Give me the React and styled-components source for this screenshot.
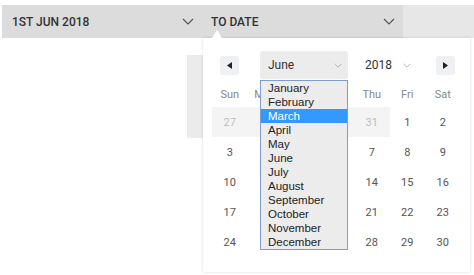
import { createGlobalStyle } from 'styled-components'
import styled from 'styled-components'

const GlobalStyle = createGlobalStyle`
  body {
    margin: 0;
    background: #ffffff;
    font-family: Roboto, 'Liberation Sans', sans-serif;
  }
`

const Page = styled.div`
  position: relative;
  width: 474px;
  height: 275px;
  overflow: hidden;
  padding-top: 5px;
  box-sizing: border-box;
`

const Bar = styled.div`
  display: flex;
  height: 33px;
  margin-left: 2px;
  background-color: #e7e7e7;
`

const Field = styled.div`
  display: flex;
  align-items: center;
  justify-content: space-between;
  width: ${(p) => p.width}px;
  box-sizing: border-box;
  padding: 0 ${(p) => p.right}px 0 ${(p) => p.left}px;
  background-color: #dcdcdc;
  color: #333333;
  font-size: 12px;
  font-weight: 500;
  text-transform: uppercase;
`

const Backdrop = styled.div`
  margin: 17px 0 0 187px;
  width: 240px;
  height: 83px;
  background-color: #ebebeb;
`

const Popup = styled.div`
  position: absolute;
  left: 203px;
  top: 38px;
  width: 267px;
  height: 234px;
  background-color: #ffffff;
  box-shadow: 0 0 3px rgba(0, 0, 0, 0.14);

  &:before {
    content: '';
    position: absolute;
    top: -8px;
    left: 9px;
    border-left: 5px solid transparent;
    border-right: 5px solid transparent;
    border-bottom: 8px solid #ffffff;
  }
`

const Header = styled.div`
  display: flex;
  align-items: center;
  height: 28px;
  padding: 13px 15px 0 17px;
`

const NavButton = styled.div`
  display: flex;
  align-items: center;
  justify-content: center;
  width: 19px;
  height: 19px;
  border-radius: 3px;
  background-color: #eef0f4;
  margin-left: ${(p) => (p.next ? 'auto' : '0')};
`

const MonthSelect = styled.div`
  display: flex;
  align-items: center;
  justify-content: space-between;
  width: 88px;
  height: 28px;
  box-sizing: border-box;
  margin-left: 21px;
  padding: 0 6px 0 8px;
  border-radius: 3px;
  background-color: #ececec;
  color: #333333;
  font-size: 12px;
`

const YearSelect = styled.div`
  display: flex;
  align-items: center;
  gap: 11px;
  margin-left: 17px;
  color: #333333;
  font-size: 12px;
`

const Grid = styled.div`
  display: grid;
  grid-template-columns: repeat(7, 35.5px);
  grid-auto-rows: 30px;
  grid-template-rows: 26px;
  margin: 2px 0 0 9px;
`

const Weekday = styled.div`
  display: flex;
  align-items: center;
  justify-content: center;
  color: #888888;
  font-size: 11px;
`

const Day = styled.div`
  display: flex;
  align-items: center;
  justify-content: center;
  font-size: 11px;
  color: ${(p) => (p.muted ? '#bdbdbd' : '#555555')};
  background-color: ${(p) => (p.band ? '#f4f4f4' : 'transparent')};
  visibility: ${(p) => (p.covered ? 'hidden' : 'visible')};
`

const Band = styled.div`
  grid-column: 1 / span 5;
  grid-row: 2;
  background-color: #f4f4f4;
`

const MonthList = styled.ul`
  position: absolute;
  left: 57px;
  top: 42px;
  width: 88px;
  margin: 0;
  padding: 0;
  list-style: none;
  box-sizing: border-box;
  border: 1px solid #7f9ccb;
  background-color: #ececec;
  font-family: 'Liberation Sans', Arial, sans-serif;
  font-size: 11.5px;
`

const MonthItem = styled.li`
  height: 14px;
  line-height: 14px;
  padding-left: 7px;
  color: ${(p) => (p.selected ? '#ffffff' : '#222222')};
  background-color: ${(p) => (p.selected ? '#3399ff' : 'transparent')};
`

const Chevron = ({ w = 12, h = 7, color = '#555555' }) => (
  <svg width={w} height={h} viewBox="0 0 12 7" fill="none">
    <polyline points="1,1 6,6 11,1" stroke={color} strokeWidth="1.2" />
  </svg>
)

const Triangle = ({ dir }) => (
  <svg width="5" height="7" viewBox="0 0 5 7">
    <polygon
      points={dir === 'left' ? '5,0 0,3.5 5,7' : '0,0 5,3.5 0,7'}
      fill="#222222"
    />
  </svg>
)

const months = [
  'January',
  'February',
  'March',
  'April',
  'May',
  'June',
  'July',
  'August',
  'September',
  'October',
  'November',
  'December',
]

const weekdays = ['Sun', 'Mon', 'Tue', 'Wed', 'Thu', 'Fri', 'Sat']

const days = [
  [27, 28, 29, 30, 31, 1, 2],
  [3, 4, 5, 6, 7, 8, 9],
  [10, 11, 12, 13, 14, 15, 16],
  [17, 18, 19, 20, 21, 22, 23],
  [24, 25, 26, 27, 28, 29, 30],
]

export default function App() {
  return (
    <Page>
      <GlobalStyle />
      <Bar>
        <Field width={201} left={10} right={9}>
          <span>1st Jun 2018</span>
          <Chevron />
        </Field>
        <Field width={200} left={8} right={8}>
          <span>To Date</span>
          <Chevron />
        </Field>
      </Bar>
      <Backdrop />

      <Popup>
        <Header>
          <NavButton>
            <Triangle dir="left" />
          </NavButton>
          <MonthSelect>
            <span>June</span>
            <Chevron w={8} h={5} color="#aaaaaa" />
          </MonthSelect>
          <YearSelect>
            <span>2018</span>
            <Chevron w={8} h={5} color="#aaaaaa" />
          </YearSelect>
          <NavButton next>
            <Triangle dir="right" />
          </NavButton>
        </Header>

        <Grid>
          {weekdays.map((d, c) => (
            <Weekday key={d} style={c > 1 && c < 4 ? { visibility: 'hidden' } : undefined}>
              {d}
            </Weekday>
          ))}
          <Band />
          {days.map((week, r) =>
            week.map((d, c) => (
              <Day
                key={`${r}-${c}`}
                style={{ gridRow: r + 2, gridColumn: c + 1 }}
                muted={r === 0 && c < 5}
                covered={c > 0 && c < 4}
              >
                {d}
              </Day>
            ))
          )}
        </Grid>

        <MonthList>
          {months.map((m) => (
            <MonthItem key={m} selected={m === 'March'}>
              {m}
            </MonthItem>
          ))}
        </MonthList>
      </Popup>
    </Page>
  )
}
